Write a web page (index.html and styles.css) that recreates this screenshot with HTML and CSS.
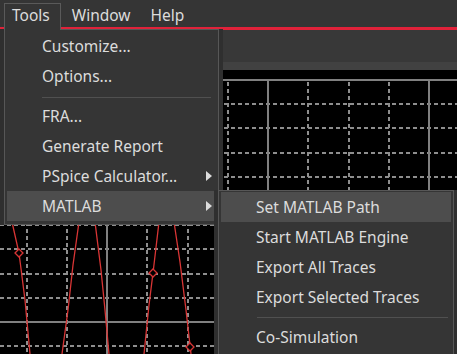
FILE: index.html
```html
<!DOCTYPE html>
<html lang="en">
<head>
    <meta charset="UTF-8">
    <title>Tools menu</title>
    <link rel="stylesheet" href="styles.css">
</head>
<body>

<div class="app">
    <div class="menubar">
        <span class="menu-title open">Tools</span>
        <span class="menu-title">Window</span>
        <span class="menu-title">Help</span>
    </div>
    <div class="toolbar"></div>
    <div class="toolband"></div>

    <div class="plot">
        <svg width="457" height="284" viewBox="0 70 457 284">
            <g class="grid-dash">
                <line x1="27" y1="82" x2="27" y2="354"/>
                <line x1="67" y1="82" x2="67" y2="354"/>
                <line x1="147" y1="82" x2="147" y2="354"/>
                <line x1="188" y1="82" x2="188" y2="354"/>
                <line x1="228" y1="82" x2="228" y2="354"/>
                <line x1="308" y1="82" x2="308" y2="354"/>
                <line x1="349" y1="82" x2="349" y2="354"/>
                <line x1="389" y1="82" x2="389" y2="354"/>
                <line x1="0" y1="104" x2="457" y2="104"/>
                <line x1="0" y1="128" x2="457" y2="128"/>
                <line x1="0" y1="153" x2="457" y2="153"/>
                <line x1="0" y1="177" x2="457" y2="177"/>
                <line x1="0" y1="201" x2="457" y2="201"/>
                <line x1="0" y1="225" x2="457" y2="225"/>
                <line x1="0" y1="249" x2="457" y2="249"/>
                <line x1="0" y1="274" x2="457" y2="274"/>
                <line x1="0" y1="298" x2="457" y2="298"/>
                <line x1="0" y1="346" x2="457" y2="346"/>
            </g>
            <g class="grid-solid">
                <line x1="0" y1="80" x2="457" y2="80"/>
                <line x1="0" y1="322" x2="457" y2="322"/>
                <line x1="107" y1="80" x2="107" y2="354"/>
                <line x1="268" y1="80" x2="268" y2="354"/>
                <line x1="429" y1="80" x2="429" y2="354"/>
            </g>
            <g class="trace">
                <polyline points="12,222 19,253 25,300 30,354"/>
                <polyline points="62,354 68,310 73,265 79,222"/>
                <polyline points="95,222 101,270 105,310 109,354"/>
                <polyline points="144,354 149,305 153,273 159,222"/>
                <polyline points="174,222 180,262 186,310 191,354"/>
                <polygon class="mark" points="19,249 23,253 19,257 15,253"/>
                <polygon class="mark" points="153,269 157,273 153,277 149,273"/>
                <polygon class="mark" points="190,343 194,347 190,351 186,347"/>
            </g>
        </svg>
    </div>

    <div class="dropdown main">
        <div class="item">Customize...</div>
        <div class="item">Options...</div>
        <div class="sep"></div>
        <div class="item">FRA...</div>
        <div class="item">Generate Report</div>
        <div class="item">PSpice Calculator...<span class="arrow"></span></div>
        <div class="item active">MATLAB<span class="arrow"></span></div>
    </div>

    <div class="dropdown sub">
        <div class="item active">Set MATLAB Path</div>
        <div class="item">Start MATLAB Engine</div>
        <div class="item">Export All Traces</div>
        <div class="item">Export Selected Traces</div>
        <div class="sep"></div>
        <div class="item">Co-Simulation</div>
    </div>
</div>

</body>
</html>
```

FILE: styles.css
```css
body {
    margin: 0;
    background-color: #000;
    font-family: "Noto Sans", "Open Sans", sans-serif;
    font-size: 15.5px;
    color: #dcdcdc;
    overflow: hidden;
}
.app {
    position: relative;
    width: 457px;
    height: 354px;
    overflow: hidden;
}
.menubar {
    display: flex;
    align-items: flex-end;
    height: 27px;
    padding-left: 4px;
    background-color: #353535;
    border-bottom: 3px solid #e0223a;
}
.menu-title {
    line-height: 23px;
    padding: 0 8px 3px 10px;
    margin-bottom: -3px;
    border: 1px solid transparent;
    border-bottom: 0;
}
.menu-title.open {
    position: relative;
    z-index: 2;
    background-color: #353535;
    border-color: #5a5a5a;
    padding-left: 7px;
    padding-right: 10px;
}
.toolbar {
    height: 32px;
    background-color: #383838;
}
.toolband {
    height: 8px;
    background-color: #414141;
}
.plot svg {
    display: block;
}
.grid-dash line {
    stroke: #8e8e8e;
    stroke-width: 2;
    stroke-dasharray: 4 3;
    shape-rendering: crispEdges;
}
.grid-solid line {
    stroke: #808080;
    stroke-width: 2;
    shape-rendering: crispEdges;
}
.trace polyline {
    fill: none;
    stroke: #d93535;
    stroke-width: 1.3;
}
.trace .mark {
    fill: #000;
    stroke: #d93535;
    stroke-width: 1.3;
}
.dropdown {
    position: absolute;
    z-index: 1;
    background-color: #353535;
    border: 1px solid #575757;
    box-shadow: 4px 0 0 #2f2f2f, -4px 0 0 #2f2f2f;
}
.dropdown.main {
    left: 4px;
    top: 29px;
    width: 213px;
    padding: 1px 0 3px;
}
.dropdown.sub {
    z-index: 3;
    left: 218px;
    top: 190px;
    width: 234px;
    height: 180px;
    padding-top: 1px;
}
.item {
    display: flex;
    justify-content: space-between;
    align-items: center;
    height: 30px;
    line-height: 30px;
    margin: 0 3px 0 2px;
    padding: 0 3px 0 35px;
    white-space: nowrap;
}
.sub .item {
    margin: 0 2px;
}
.item.active {
    background-color: #4d4d4d;
}
.arrow {
    width: 0;
    height: 0;
    border-left: 6px solid #dcdcdc;
    border-top: 5px solid transparent;
    border-bottom: 5px solid transparent;
}
.sep {
    height: 1px;
    background-color: #505050;
    margin: 6px 7px 3px 37px;
}
.sub .sep {
    margin: 5px 5px 4px 38px;
}
```
